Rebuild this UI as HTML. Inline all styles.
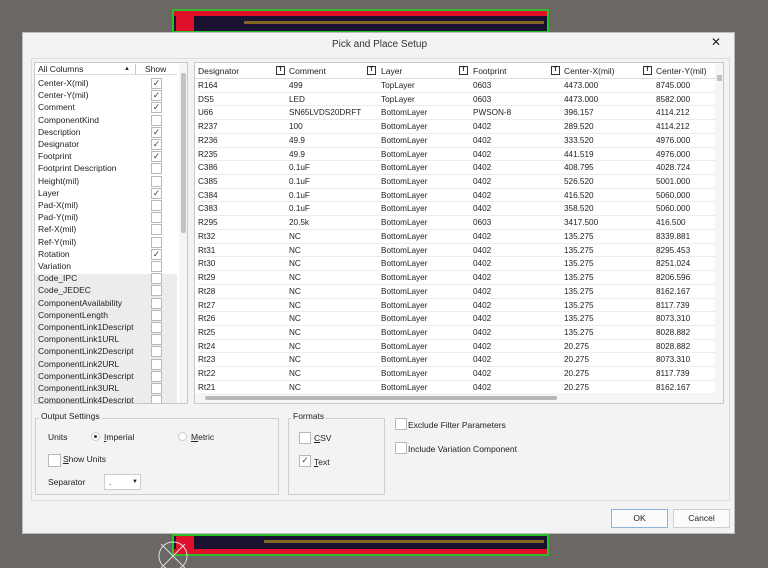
<!DOCTYPE html>
<html><head><meta charset="utf-8"><style>
*{margin:0;padding:0;box-sizing:border-box}
body{width:768px;height:568px;background:#6a6765;position:relative;overflow:hidden;font-family:"Liberation Sans",sans-serif;font-size:8.5px;color:#222}
.a{position:absolute}
.pcb{position:absolute;background:#1a1030;border:2px solid #2bbf2b}
.dlg{left:22px;top:32px;width:713px;height:502px;background:#f3f3f3;border:1px solid #bbb}
.cb{position:absolute;width:11px;height:11px;border:1px solid #b8b8b8;background:#fff;font-size:9px;line-height:9px;text-align:center;color:#444}
.row{position:absolute;left:0;height:12.4px;line-height:12.4px;white-space:nowrap}
.grow{position:absolute;left:0;width:520px;height:13.72px;line-height:13.72px;border-bottom:1px solid #ececec;font-size:8.2px}
.grow span{position:absolute}
.fi{position:absolute;top:3px;width:9px;height:9px;border:1px solid #333;font-size:6px;line-height:7px;text-align:center;font-weight:bold}
</style></head><body>
<div class="pcb" style="left:172px;top:9px;width:377px;height:24px;">
<div class="a" style="left:0;top:0;width:373px;height:5px;background:#e0102a"></div>
<div class="a" style="left:2px;top:3px;width:18px;height:17px;background:#e0102a"></div>
<div class="a" style="left:70px;top:10px;width:300px;height:3px;background:#b08a20;opacity:.7"></div>
</div>
<div class="pcb" style="left:172px;top:534px;width:377px;height:22px;">
<div class="a" style="left:0;top:13px;width:373px;height:5px;background:#e0102a"></div>
<div class="a" style="left:2px;top:0;width:18px;height:16px;background:#e0102a"></div>
<div class="a" style="left:90px;top:4px;width:280px;height:3px;background:#b08a20;opacity:.7"></div>
</div>
<svg class="a" style="left:155px;top:538px" width="36" height="30"><circle cx="18" cy="18" r="14" fill="none" stroke="#ddd"/><path d="M6 6L30 30M30 6L6 30" stroke="#ddd"/></svg>

<div class="a dlg">
<div class="a" style="left:0;top:6px;width:713px;text-align:center;font-size:10px;color:#333">Pick and Place Setup</div>
<div class="a" style="left:688px;top:2px;font-size:12px;color:#222">✕</div>
<div class="a" style="left:8px;top:25px;width:699px;height:443px;border:1px solid #dcdcdc;background:#f3f3f3"></div>

<!-- left list -->
<div class="a" style="left:11px;top:29px;width:154px;height:342px;background:#fff;border:1px solid #c8c8c8;overflow:hidden">
<div class="a" style="left:0;top:0;width:142px;height:12px;border-bottom:1px solid #ddd;line-height:12px"><span class="a" style="left:3px">All Columns</span><span class="a" style="left:89px;font-size:6px">▲</span><span class="a" style="left:100px;top:1px;width:1px;height:10px;background:#ccc"></span><span class="a" style="left:110px">Show</span></div>
<div class="a" style="left:0;top:211px;width:142px;height:131px;background:#ececec"></div>
<div class="a" style="left:3px;top:14px;width:140px">
<div class="row" style="top:0">Center-X(mil)</div><div class="row" style="top:12.2px">Center-Y(mil)</div><div class="row" style="top:24.4px">Comment</div><div class="row" style="top:36.6px">ComponentKind</div><div class="row" style="top:48.8px">Description</div><div class="row" style="top:61px">Designator</div><div class="row" style="top:73.2px">Footprint</div><div class="row" style="top:85.4px">Footprint Description</div><div class="row" style="top:97.6px">Height(mil)</div><div class="row" style="top:109.8px">Layer</div><div class="row" style="top:122px">Pad-X(mil)</div><div class="row" style="top:134.2px">Pad-Y(mil)</div><div class="row" style="top:146.4px">Ref-X(mil)</div><div class="row" style="top:158.6px">Ref-Y(mil)</div><div class="row" style="top:170.8px">Rotation</div><div class="row" style="top:183px">Variation</div><div class="row" style="top:195.2px">Code_IPC</div><div class="row" style="top:207.4px">Code_JEDEC</div><div class="row" style="top:219.6px">ComponentAvailability</div><div class="row" style="top:231.8px">ComponentLength</div><div class="row" style="top:244px">ComponentLink1Descript</div><div class="row" style="top:256.2px">ComponentLink1URL</div><div class="row" style="top:268.4px">ComponentLink2Descript</div><div class="row" style="top:280.6px">ComponentLink2URL</div><div class="row" style="top:292.8px">ComponentLink3Descript</div><div class="row" style="top:305px">ComponentLink3URL</div><div class="row" style="top:317.2px">ComponentLink4Descript</div>
</div>
<div class="a" style="left:116px;top:15px">
<div class="cb" style="top:0">✓</div><div class="cb" style="top:12.2px">✓</div><div class="cb" style="top:24.4px">✓</div><div class="cb" style="top:36.6px"></div><div class="cb" style="top:48.8px">✓</div><div class="cb" style="top:61px">✓</div><div class="cb" style="top:73.2px">✓</div><div class="cb" style="top:85.4px"></div><div class="cb" style="top:97.6px"></div><div class="cb" style="top:109.8px">✓</div><div class="cb" style="top:122px"></div><div class="cb" style="top:134.2px"></div><div class="cb" style="top:146.4px"></div><div class="cb" style="top:158.6px"></div><div class="cb" style="top:170.8px">✓</div><div class="cb" style="top:183px"></div><div class="cb" style="top:195.2px"></div><div class="cb" style="top:207.4px"></div><div class="cb" style="top:219.6px"></div><div class="cb" style="top:231.8px"></div><div class="cb" style="top:244px"></div><div class="cb" style="top:256.2px"></div><div class="cb" style="top:268.4px"></div><div class="cb" style="top:280.6px"></div><div class="cb" style="top:292.8px"></div><div class="cb" style="top:305px"></div><div class="cb" style="top:317.2px"></div>
</div>
<div class="a" style="left:144px;top:0;width:9px;height:340px;background:#f5f5f5"></div>
<div class="a" style="left:146px;top:10px;width:5px;height:160px;background:#c2c2c2;border-radius:2px"></div>
</div>

<!-- grid -->
<div class="a" style="left:171px;top:29px;width:530px;height:342px;background:#fff;border:1px solid #c8c8c8;overflow:hidden">
<div class="a" style="left:0;top:0;width:520px;height:16px;border-bottom:1px solid #ddd;line-height:16px">
<span class="a" style="left:3px">Designator</span><span class="fi" style="left:81px">T</span>
<span class="a" style="left:94px">Comment</span><span class="fi" style="left:172px">T</span>
<span class="a" style="left:186px">Layer</span><span class="fi" style="left:264px">T</span>
<span class="a" style="left:278px">Footprint</span><span class="fi" style="left:356px">T</span>
<span class="a" style="left:369px">Center-X(mil)</span><span class="fi" style="left:448px">T</span>
<span class="a" style="left:461px">Center-Y(mil)</span>
</div>
<div class="a" style="left:3px;top:16px">
<div class="grow" style="top:0"><span style="left:0">R164</span><span style="left:91px">499</span><span style="left:183px">TopLayer</span><span style="left:275px">0603</span><span style="left:366px">4473.000</span><span style="left:458px">8745.000</span></div>
<div class="grow" style="top:13.72px"><span style="left:0">DS5</span><span style="left:91px">LED</span><span style="left:183px">TopLayer</span><span style="left:275px">0603</span><span style="left:366px">4473.000</span><span style="left:458px">8582.000</span></div>
<div class="grow" style="top:27.44px"><span style="left:0">U66</span><span style="left:91px">SN65LVDS20DRFT</span><span style="left:183px">BottomLayer</span><span style="left:275px">PWSON-8</span><span style="left:366px">396.157</span><span style="left:458px">4114.212</span></div>
<div class="grow" style="top:41.16px"><span style="left:0">R237</span><span style="left:91px">100</span><span style="left:183px">BottomLayer</span><span style="left:275px">0402</span><span style="left:366px">289.520</span><span style="left:458px">4114.212</span></div>
<div class="grow" style="top:54.88px"><span style="left:0">R236</span><span style="left:91px">49.9</span><span style="left:183px">BottomLayer</span><span style="left:275px">0402</span><span style="left:366px">333.520</span><span style="left:458px">4976.000</span></div>
<div class="grow" style="top:68.6px"><span style="left:0">R235</span><span style="left:91px">49.9</span><span style="left:183px">BottomLayer</span><span style="left:275px">0402</span><span style="left:366px">441.519</span><span style="left:458px">4976.000</span></div>
<div class="grow" style="top:82.32px"><span style="left:0">C386</span><span style="left:91px">0.1uF</span><span style="left:183px">BottomLayer</span><span style="left:275px">0402</span><span style="left:366px">408.795</span><span style="left:458px">4028.724</span></div>
<div class="grow" style="top:96.04px"><span style="left:0">C385</span><span style="left:91px">0.1uF</span><span style="left:183px">BottomLayer</span><span style="left:275px">0402</span><span style="left:366px">526.520</span><span style="left:458px">5001.000</span></div>
<div class="grow" style="top:109.76px"><span style="left:0">C384</span><span style="left:91px">0.1uF</span><span style="left:183px">BottomLayer</span><span style="left:275px">0402</span><span style="left:366px">416.520</span><span style="left:458px">5060.000</span></div>
<div class="grow" style="top:123.48px"><span style="left:0">C383</span><span style="left:91px">0.1uF</span><span style="left:183px">BottomLayer</span><span style="left:275px">0402</span><span style="left:366px">358.520</span><span style="left:458px">5060.000</span></div>
<div class="grow" style="top:137.2px"><span style="left:0">R295</span><span style="left:91px">20.5k</span><span style="left:183px">BottomLayer</span><span style="left:275px">0603</span><span style="left:366px">3417.500</span><span style="left:458px">416.500</span></div>
<div class="grow" style="top:150.92px"><span style="left:0">Rt32</span><span style="left:91px">NC</span><span style="left:183px">BottomLayer</span><span style="left:275px">0402</span><span style="left:366px">135.275</span><span style="left:458px">8339.881</span></div>
<div class="grow" style="top:164.64px"><span style="left:0">Rt31</span><span style="left:91px">NC</span><span style="left:183px">BottomLayer</span><span style="left:275px">0402</span><span style="left:366px">135.275</span><span style="left:458px">8295.453</span></div>
<div class="grow" style="top:178.36px"><span style="left:0">Rt30</span><span style="left:91px">NC</span><span style="left:183px">BottomLayer</span><span style="left:275px">0402</span><span style="left:366px">135.275</span><span style="left:458px">8251.024</span></div>
<div class="grow" style="top:192.08px"><span style="left:0">Rt29</span><span style="left:91px">NC</span><span style="left:183px">BottomLayer</span><span style="left:275px">0402</span><span style="left:366px">135.275</span><span style="left:458px">8206.596</span></div>
<div class="grow" style="top:205.8px"><span style="left:0">Rt28</span><span style="left:91px">NC</span><span style="left:183px">BottomLayer</span><span style="left:275px">0402</span><span style="left:366px">135.275</span><span style="left:458px">8162.167</span></div>
<div class="grow" style="top:219.52px"><span style="left:0">Rt27</span><span style="left:91px">NC</span><span style="left:183px">BottomLayer</span><span style="left:275px">0402</span><span style="left:366px">135.275</span><span style="left:458px">8117.739</span></div>
<div class="grow" style="top:233.24px"><span style="left:0">Rt26</span><span style="left:91px">NC</span><span style="left:183px">BottomLayer</span><span style="left:275px">0402</span><span style="left:366px">135.275</span><span style="left:458px">8073.310</span></div>
<div class="grow" style="top:246.96px"><span style="left:0">Rt25</span><span style="left:91px">NC</span><span style="left:183px">BottomLayer</span><span style="left:275px">0402</span><span style="left:366px">135.275</span><span style="left:458px">8028.882</span></div>
<div class="grow" style="top:260.68px"><span style="left:0">Rt24</span><span style="left:91px">NC</span><span style="left:183px">BottomLayer</span><span style="left:275px">0402</span><span style="left:366px">20.275</span><span style="left:458px">8028.882</span></div>
<div class="grow" style="top:274.4px"><span style="left:0">Rt23</span><span style="left:91px">NC</span><span style="left:183px">BottomLayer</span><span style="left:275px">0402</span><span style="left:366px">20.275</span><span style="left:458px">8073.310</span></div>
<div class="grow" style="top:288.12px"><span style="left:0">Rt22</span><span style="left:91px">NC</span><span style="left:183px">BottomLayer</span><span style="left:275px">0402</span><span style="left:366px">20.275</span><span style="left:458px">8117.739</span></div>
<div class="grow" style="top:301.84px"><span style="left:0">Rt21</span><span style="left:91px">NC</span><span style="left:183px">BottomLayer</span><span style="left:275px">0402</span><span style="left:366px">20.275</span><span style="left:458px">8162.167</span></div>
</div>
<div class="a" style="left:0;top:330px;width:520px;height:10px;background:#f5f5f5"></div>
<div class="a" style="left:10px;top:333px;width:352px;height:4px;background:#b8b8b8;border-radius:2px"></div>
<div class="a" style="left:520px;top:0;width:9px;height:340px;background:#f5f5f5"></div>
<div class="a" style="left:522px;top:12px;width:5px;height:6px;background:#c2c2c2"></div>
</div>

<!-- output settings -->
<div class="a" style="left:12px;top:385px;width:244px;height:77px;border:1px solid #cfcfcf"></div>
<div class="a" style="left:16px;top:378px;background:#f3f3f3;padding:0 2px">Output Settings</div>
<div class="a" style="left:25px;top:399px">Units</div>
<div class="a" style="left:68px;top:399px;width:9px;height:9px;border-radius:50%;border:1px solid #ccc;background:#fff"><div class="a" style="left:2px;top:2px;width:3px;height:3px;border-radius:50%;background:#333"></div></div>
<div class="a" style="left:81px;top:399px"><u>I</u>mperial</div>
<div class="a" style="left:155px;top:399px;width:9px;height:9px;border-radius:50%;border:1px solid #ccc;background:#fff"></div>
<div class="a" style="left:168px;top:399px"><u>M</u>etric</div>
<div class="cb" style="left:25px;top:421px;width:13px;height:13px"></div>
<div class="a" style="left:40px;top:421px"><u>S</u>how Units</div>
<div class="a" style="left:25px;top:444px">Separator</div>
<div class="a" style="left:81px;top:441px;width:37px;height:16px;border:1px solid #ccc;background:#fff;line-height:14px"><span class="a" style="left:4px">.</span><span class="a" style="left:27px;font-size:6px">▼</span></div>

<!-- formats -->
<div class="a" style="left:265px;top:385px;width:97px;height:77px;border:1px solid #cfcfcf"></div>
<div class="a" style="left:268px;top:378px;background:#f3f3f3;padding:0 2px">Formats</div>
<div class="cb" style="left:276px;top:399px;width:12px;height:12px"></div>
<div class="a" style="left:291px;top:400px"><u>C</u>SV</div>
<div class="cb" style="left:276px;top:422px;width:12px;height:12px">✓</div>
<div class="a" style="left:291px;top:424px"><u>T</u>ext</div>

<div class="cb" style="left:372px;top:385px;width:12px;height:12px"></div>
<div class="a" style="left:385px;top:387px">Exclude Filter Parameters</div>
<div class="cb" style="left:372px;top:409px;width:12px;height:12px"></div>
<div class="a" style="left:385px;top:411px">Include Variation Component</div>

<div class="a" style="left:588px;top:476px;width:57px;height:19px;border:1px solid #8cb4dc;background:#fbfbfb;text-align:center;line-height:17px">OK</div>
<div class="a" style="left:650px;top:476px;width:57px;height:19px;border:1px solid #cfcfcf;background:#fbfbfb;text-align:center;line-height:17px">Cancel</div>
</div>
</body></html>
